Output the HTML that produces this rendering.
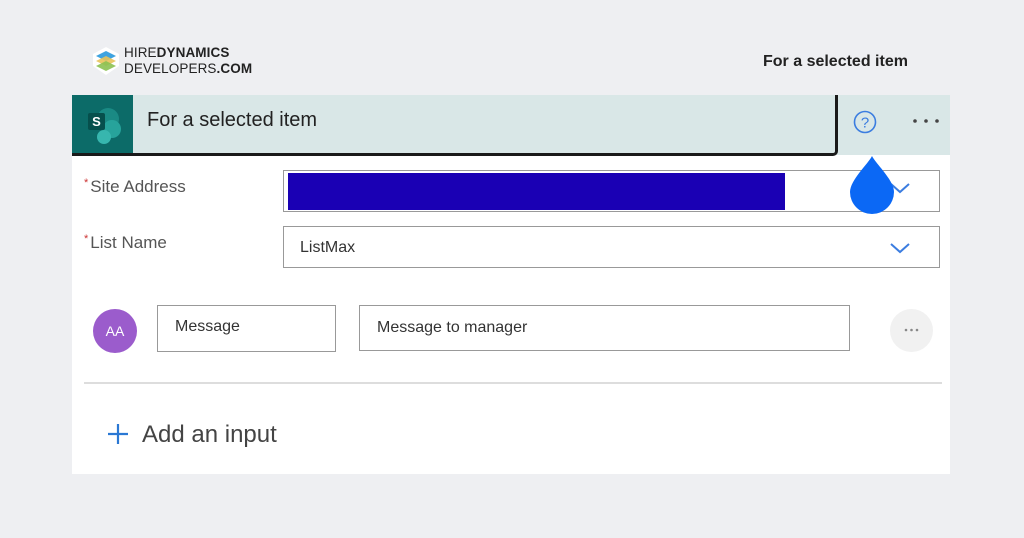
<!DOCTYPE html>
<html><head><meta charset="utf-8"><style>
*{margin:0;padding:0;box-sizing:border-box}
body{width:1024px;height:538px;background:#eeeff2;font-family:"Liberation Sans",sans-serif;position:relative;overflow:hidden}
.abs{position:absolute}
.card{left:72px;top:95px;width:878px;height:379px;background:#fff}
.hdr{left:72px;top:95px;width:878px;height:60px;background:#d9e7e7}
.hbox{left:72px;top:95px;width:766px;height:61px;border-right:3px solid #1a1a1a;border-bottom:3px solid #1a1a1a;border-bottom-right-radius:5px}
.ico{left:72px;top:95px;width:61px;height:58px;background:#0c6b68}
.lbl{font-size:17px;color:#555}
.lbl b{color:#c33;font-size:11px;vertical-align:top;font-weight:normal;margin-right:2px}
.inp{border:1.5px solid #999;background:#fff}
</style></head><body>
<svg class="abs" style="left:92px;top:46px" width="28" height="30" viewBox="0 0 28 30">
<path d="M14 1 L27 8 L27 20 L14 29 L1 20 L1 8Z" fill="#fff"/>
<path d="M14 5 L24 10 L14 15 L4 10Z" fill="#3ea3e0"/>
<path d="M14 10 L24 15 L14 20 L4 15Z" fill="#e8c35a" opacity=".9"/>
<path d="M14 15 L24 20 L14 25 L4 20Z" fill="#8cc152" opacity=".9"/>
</svg>
<div class="abs" style="left:124px;top:45px;font-size:13.5px;line-height:16px;color:#222;letter-spacing:.1px">HIRE<b>DYNAMICS</b><br>DEVELOPERS<b>.COM</b></div>
<div class="abs" style="left:763px;top:53px;font-size:16px;font-weight:bold;color:#222">For a selected item</div>
<div class="abs card"></div>
<div class="abs hdr"></div>
<div class="abs hbox"></div>
<div class="abs ico"><svg width="61" height="58"><circle cx="36" cy="24" r="11" fill="#1a8a84"/><circle cx="40" cy="34" r="9" fill="#27a39b"/><circle cx="32" cy="42" r="7" fill="#37b6ae"/><rect x="16" y="18" width="17" height="17" rx="2" fill="#064f4c"/><text x="24.5" y="31" font-size="13" font-weight="bold" fill="#fff" text-anchor="middle" font-family="Liberation Sans">S</text></svg></div>
<div class="abs" style="left:147px;top:109px;font-size:20px;color:#222">For a selected item</div>
<svg class="abs" style="left:852px;top:109px" width="26" height="26"><circle cx="13" cy="13" r="10.5" fill="none" stroke="#3b7de0" stroke-width="1.6"/><text x="13" y="18.5" font-size="15" fill="#3b7de0" text-anchor="middle" font-family="Liberation Sans">?</text></svg>
<svg class="abs" style="left:910px;top:116px" width="40" height="10"><circle cx="5" cy="5" r="1.8" fill="#444"/><circle cx="16" cy="5" r="1.8" fill="#444"/><circle cx="27" cy="5" r="1.8" fill="#444"/></svg>
<div class="abs lbl" style="left:84px;top:177px"><b>*</b>Site Address</div>
<div class="abs lbl" style="left:84px;top:233px"><b>*</b>List Name</div>
<div class="abs inp" style="left:283px;top:170px;width:657px;height:42px"></div>
<div class="abs" style="left:288px;top:173px;width:497px;height:37px;background:#1a00b4"></div>
<svg class="abs" style="left:888px;top:180px" width="24" height="16"><path d="M3 4 L12 12 L21 4" fill="none" stroke="#3b7de0" stroke-width="2"/></svg>
<div class="abs inp" style="left:283px;top:226px;width:657px;height:42px"></div>
<div class="abs" style="left:300px;top:239px;font-size:16px;color:#333">ListMax</div>
<svg class="abs" style="left:888px;top:240px" width="24" height="16"><path d="M3 4 L12 12 L21 4" fill="none" stroke="#3b7de0" stroke-width="2"/></svg>
<svg class="abs" style="left:846px;top:154px" width="52" height="62"><path d="M26 2 C30 10 48 26 48 38 A22 22 0 0 1 4 38 C4 26 22 10 26 2Z" fill="#0b68f5"/></svg>
<div class="abs" style="left:93px;top:309px;width:44px;height:44px;border-radius:50%;background:#9b5ccc;color:#fff;font-size:14px;text-align:center;line-height:44px">AA</div>
<div class="abs inp" style="left:157px;top:305px;width:179px;height:47px"></div>
<div class="abs" style="left:175px;top:318px;font-size:16px;color:#333">Message</div>
<div class="abs inp" style="left:359px;top:305px;width:491px;height:46px"></div>
<div class="abs" style="left:377px;top:319px;font-size:16px;color:#333">Message to manager</div>
<div class="abs" style="left:890px;top:309px;width:43px;height:43px;border-radius:50%;background:#f1f1f1"></div>
<svg class="abs" style="left:902px;top:326px" width="20" height="8"><circle cx="4" cy="4" r="1.3" fill="#888"/><circle cx="9.5" cy="4" r="1.3" fill="#888"/><circle cx="15" cy="4" r="1.3" fill="#888"/></svg>
<div class="abs" style="left:84px;top:382px;width:858px;height:2px;background:#ddd"></div>
<svg class="abs" style="left:107px;top:423px" width="22" height="22"><path d="M11 1 V21 M1 11 H21" stroke="#2a78d4" stroke-width="2.2"/></svg>
<div class="abs" style="left:142px;top:421px;font-size:24px;color:#444">Add an input</div>
</body></html>
